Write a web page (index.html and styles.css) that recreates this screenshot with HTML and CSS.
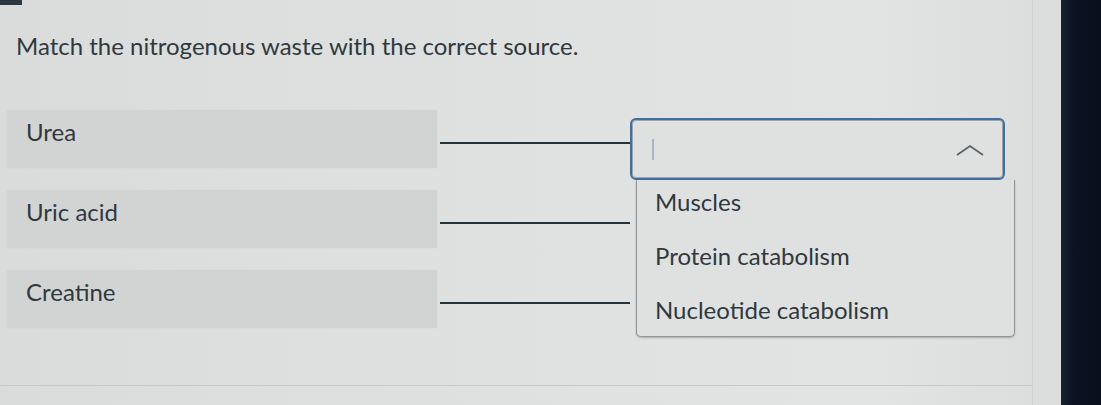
FILE: index.html
```html
<!DOCTYPE html>
<html>
<head>
<meta charset="utf-8">
<link rel="stylesheet" href="styles.css">
</head>
<body>
<div class="frame">
  <div class="screen">
    <div class="corner"></div>
    <h1 class="title">Match the nitrogenous waste with the correct source.</h1>
    <div class="rows">
      <div class="row">
        <div class="term">Urea</div>
        <div class="link"></div>
        <div class="slot">
          <div class="select">
            <span class="caret"></span>
            <svg class="chev" width="30" height="14" viewBox="0 0 30 14"><polyline points="2,12 15,3 28,12" fill="none" stroke="#5d6266" stroke-width="1.8"/></svg>
          </div>
          <ul class="menu">
            <li>Muscles</li>
            <li>Protein catabolism</li>
            <li>Nucleotide catabolism</li>
          </ul>
        </div>
      </div>
      <div class="row">
        <div class="term">Uric acid</div>
        <div class="link"></div>
      </div>
      <div class="row">
        <div class="term">Creatine</div>
        <div class="link"></div>
      </div>
    </div>
    <div class="rule"></div>
  </div>
  <div class="bezel"></div>
</div>
</body>
</html>
```
FILE: styles.css
```css
html, body {
  margin: 0;
  padding: 0;
}
body {
  width: 1101px;
  height: 405px;
  overflow: hidden;
  background: #dcdedd;
  font-family: Lato, "Open Sans", sans-serif;
  color: #2f393e;
}
.frame {
  display: flex;
  height: 405px;
}
.screen {
  flex: 1;
  position: relative;
  display: flex;
  flex-direction: column;
  background: linear-gradient(90deg, #dadcdb 0%, #e0e2e1 55%, #e2e4e3 85%, #dcdedd 100%);
  border-right: 1px solid #cfd1d0;
  margin-right: 28px;
}
.corner {
  width: 22px;
  height: 5px;
  background: #2c3740;
}
.title {
  margin: 26px 0 0 16px;
  font-size: 24px;
  font-weight: 400;
  line-height: 30px;
}
.rows {
  display: flex;
  flex-direction: column;
  gap: 22px;
  margin-top: 49px;
}
.row {
  display: flex;
  align-items: flex-start;
  height: 58px;
}
.term {
  width: 430px;
  height: 58px;
  margin-left: 7px;
  padding: 7px 0 0 19px;
  box-sizing: border-box;
  background: #d2d4d3;
  font-size: 24px;
  line-height: 30px;
  box-shadow: 0 0 1px rgba(0,0,0,0.08);
}
.term + .link {
  margin-left: 3px;
}
.link {
  width: 190px;
  height: 2px;
  margin-top: 32px;
  background: #263238;
}
.slot {
  position: relative;
  margin-top: 8px;
}
.select {
  width: 375px;
  height: 62px;
  box-sizing: border-box;
  border: 2px solid #3d6fa3;
  border-radius: 6px;
  box-shadow: inset 0 0 0 1px #9ea4a8;
  background: #dfe1e0;
  display: flex;
  align-items: center;
  justify-content: space-between;
  padding: 0 18px 0 20px;
}
.caret {
  width: 2px;
  height: 21px;
  background: #a9b6c6;
}
.chev {
  margin-top: 2px;
}
.menu {
  position: absolute;
  top: 62px;
  left: 6px;
  width: 379px;
  height: 157px;
  box-sizing: border-box;
  margin: 0;
  padding: 7px 0 0 18px;
  list-style: none;
  background: #dfe1e0;
  border: 1px solid #8f9599;
  border-top: none;
  border-radius: 0 0 5px 5px;
  box-shadow: 0 1px 2px rgba(0,0,0,0.25);
  display: flex;
  flex-direction: column;
  gap: 24px;
  font-size: 24px;
  line-height: 30px;
}
.rule {
  margin-top: auto;
  margin-bottom: 19px;
  height: 1px;
  background: #c8cac9;
}
.bezel {
  width: 40px;
  background: linear-gradient(90deg, #1a2333 0%, #0c1222 30%, #0a0f1d 100%);
}
```
